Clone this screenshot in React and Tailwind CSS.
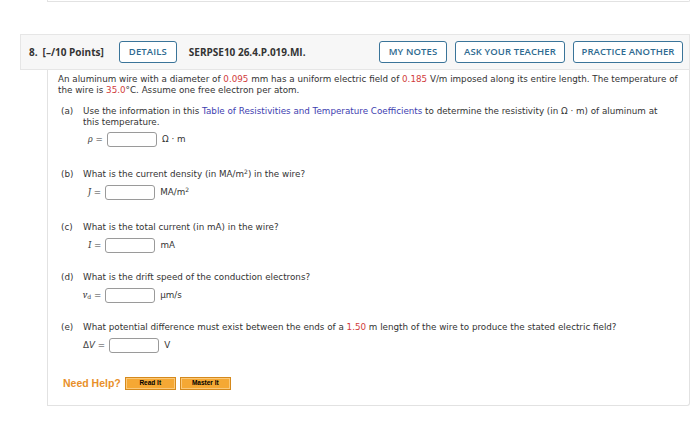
import React from "react";

const RED = "text-[#d13b3b]";

function Answer({ label, unit, wide = false }) {
  return (
    <div className={`flex items-center mt-[4px] h-[16px] ${wide ? "pl-[22px]" : "pl-[27px]"}`}>
      <span className="text-[#444] whitespace-nowrap">{label}</span>
      <span className="ml-[4px] h-[15px] w-[50px] border border-[#9a9a9a] rounded-[3px] bg-white" />
      <span className="ml-[5px] text-[#333]">{unit}</span>
    </div>
  );
}

function Part({ letter, children, className = "" }) {
  return (
    <div className={`flex ${className}`}>
      <span className="w-[25px] pl-[3px] shrink-0">({letter})</span>
      <div>{children}</div>
    </div>
  );
}

function HeaderButton({ children, className = "" }) {
  return (
    <button
      className={`h-[22px] border border-[#3a7499] rounded-[3px] bg-white text-[#2e6a90] font-semibold text-[9.5px] tracking-[0.1px] ${className}`}
    >
      {children}
    </button>
  );
}

function HelpButton({ children }) {
  return (
    <button className="h-[13px] w-[51px] bg-[#f5a834] border border-[#d5891c] shadow-[inset_0_0_0_1px_#fbc97a] text-[6.5px] font-bold text-black leading-none font-['Liberation_Sans',Arial,sans-serif]">
      {children}
    </button>
  );
}

export default function App() {
  return (
    <div className="w-[700px] h-[428px] bg-white overflow-hidden font-['DejaVu_Sans',Verdana,sans-serif]">
      {/* end of previous question */}
      <div className="ml-[47px] w-[643px] h-[2px] border-b border-r border-l border-[#e2e2e2] rounded-br-[3px]" />

      {/* QUESTION HEADER */}
      <div className="mt-[32px] ml-[20px] w-[670px] h-[36px] bg-[#f7f7f7] border border-[#e6e6e6] flex items-center pr-[6px] font-['Open_Sans',sans-serif]">
        <span className="ml-[8px] text-[10px] font-bold text-[#333]">8.</span>
        <span className="ml-[5px] text-[10px] font-bold text-[#333]">[–/10 Points]</span>
        <HeaderButton className="ml-[15px] w-[58px]">DETAILS</HeaderButton>
        <span className="ml-[12px] text-[10px] font-bold text-[#333]">SERPSE10 26.4.P.019.MI.</span>
        <div className="ml-auto flex gap-[8px]">
          <HeaderButton className="w-[68px]">MY NOTES</HeaderButton>
          <HeaderButton className="w-[110px]">ASK YOUR TEACHER</HeaderButton>
          <HeaderButton className="w-[110px]">PRACTICE ANOTHER</HeaderButton>
        </div>
      </div>

      {/* QUESTION BODY */}
      <div className="ml-[47px] w-[643px] h-[336px] border-l border-r border-b border-[#e2e2e2] rounded-br-[3px] pl-[10px] pr-[8px] pt-[4px] text-[8.75px] leading-[11px] text-[#333]">
        <p>
          An aluminum wire with a diameter of <span className={RED}>0.095</span> mm has a uniform electric field of{" "}
          <span className={RED}>0.185</span> V/m imposed along its entire length. The temperature of the wire is{" "}
          <span className={RED}>35.0</span>°C. Assume one free electron per atom.
        </p>

        <Part letter="a" className="mt-[10px]">
          <p className="pr-[10px]">
            Use the information in this{" "}
            <span className="text-[#3e3eb0]">Table of Resistivities and Temperature Coefficients</span> to determine the
            resistivity (in Ω · m) of aluminum at this temperature.
          </p>
          <div className="-ml-[22px] mt-[-1px]">
            <Answer label={<><i className="font-serif text-[10px]">ρ</i> =</>} unit="Ω · m" />
          </div>
        </Part>

        <Part letter="b" className="mt-[22px]">
          <p>
            What is the current density (in MA/m<sup className="text-[6px]">2</sup>) in the wire?
          </p>
          <div className="-ml-[22px]">
            <Answer
              label={<><i className="font-serif text-[10px]">J</i> =</>}
              unit={<>MA/m<sup className="text-[6px]">2</sup></>}
            />
          </div>
        </Part>

        <Part letter="c" className="mt-[22px]">
          <p>What is the total current (in mA) in the wire?</p>
          <div className="-ml-[22px]">
            <Answer label={<><i className="font-serif text-[10px]">I</i> =</>} unit="mA" />
          </div>
        </Part>

        <Part letter="d" className="mt-[19px]">
          <p>What is the drift speed of the conduction electrons?</p>
          <div className="-ml-[22px]">
            <Answer
              wide
              label={<><i className="font-serif text-[10px]">v</i><sub className="text-[6px]">d</sub> =</>}
              unit="µm/s"
            />
          </div>
        </Part>

        <Part letter="e" className="mt-[19px]">
          <p>
            What potential difference must exist between the ends of a <span className={RED}>1.50</span> m length of
            the wire to produce the stated electric field?
          </p>
          <div className="-ml-[22px]">
            <Answer wide label={<>Δ<i>V</i> =</>} unit="V" />
          </div>
        </Part>

        {/* NEED HELP */}
        <div className="mt-[24px] ml-[5px] flex items-center gap-[4px]">
          <span className="text-[10.5px] font-bold text-[#e8902a] font-['Liberation_Sans',Arial,sans-serif]">
            Need Help?
          </span>
          <HelpButton>Read It</HelpButton>
          <HelpButton>Master It</HelpButton>
        </div>
      </div>
    </div>
  );
}
